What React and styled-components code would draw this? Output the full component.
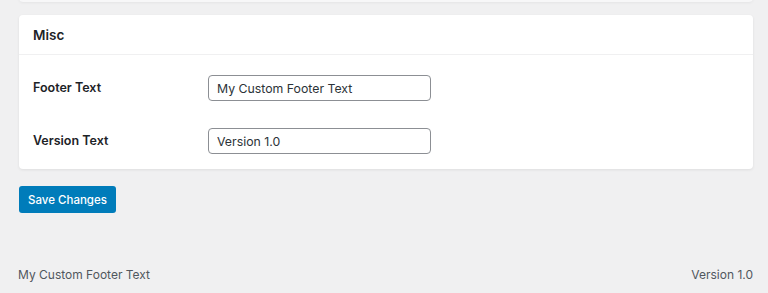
import styled, { createGlobalStyle } from "styled-components";

const GlobalStyle = createGlobalStyle`
  html, body {
    margin: 0;
    padding: 0;
    background: #f0f0f1;
    font-family: Inter, "Liberation Sans", sans-serif;
    color: #1d2327;
    overflow: hidden;
  }
`;

const Page = styled.div`
  width: 768px;
  height: 293px;
  display: flex;
  flex-direction: column;
  box-sizing: border-box;
  padding: 0 15px 0 19px;
`;

const PrevCard = styled.div`
  height: 20px;
  margin-top: -18px;
  background: #f7f7f8;
  border-radius: 4px;
  box-shadow: 0 1px 3px rgba(0, 0, 0, 0.05);
`;

const Card = styled.section`
  margin-top: 13px;
  background: #fff;
  border-radius: 4px;
  box-shadow: 0 1px 3px rgba(0, 0, 0, 0.08);
`;

const CardHeader = styled.h2`
  margin: 0;
  height: 40px;
  box-sizing: border-box;
  display: flex;
  align-items: center;
  padding: 0 14px;
  font-size: 13.5px;
  font-weight: 600;
  border-bottom: 1px solid #f0f0f1;
`;

const CardBody = styled.div`
  display: flex;
  flex-direction: column;
  gap: 27px;
  padding: 20px 14px 15px;
`;

const Row = styled.div`
  display: flex;
  align-items: center;
`;

const Label = styled.label`
  width: 175px;
  font-size: 12.5px;
  font-weight: 600;
  margin-top: -2px;
`;

const Input = styled.input`
  width: 223px;
  height: 26px;
  box-sizing: border-box;
  border: 1px solid #8c8f94;
  border-radius: 4px;
  padding: 0 8px;
  font-family: inherit;
  font-size: 12.3px;
  color: #2c3338;
  background: #fff;
`;

const Button = styled.button`
  align-self: flex-start;
  margin-top: 17px;
  width: 97px;
  height: 27px;
  padding: 0;
  border: none;
  border-radius: 3px;
  background: #007cba;
  color: #fff;
  font-family: inherit;
  font-size: 11.5px;
  font-weight: 500;
`;

const Footer = styled.footer`
  margin-top: auto;
  margin-left: -1px;
  height: 26px;
  display: flex;
  justify-content: space-between;
  font-size: 12px;
  color: #50575e;
`;

export default function App() {
  return (
    <>
      <GlobalStyle />
      <Page>
        <PrevCard />
        <Card>
          <CardHeader>Misc</CardHeader>
          <CardBody>
            <Row>
              <Label>Footer Text</Label>
              <Input defaultValue="My Custom Footer Text" />
            </Row>
            <Row>
              <Label>Version Text</Label>
              <Input defaultValue="Version 1.0" />
            </Row>
          </CardBody>
        </Card>
        <Button>Save Changes</Button>
        <Footer>
          <span>My Custom Footer Text</span>
          <span>Version 1.0</span>
        </Footer>
      </Page>
    </>
  );
}
